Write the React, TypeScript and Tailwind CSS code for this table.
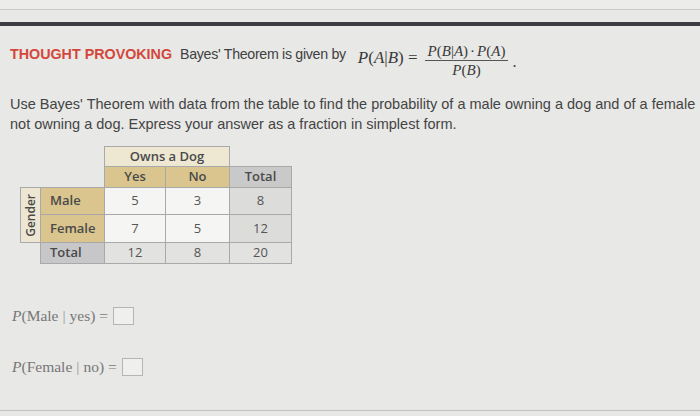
import React from 'react';

const sans = { fontFamily: '"Liberation Sans", Arial, sans-serif' };
const serif = { fontFamily: '"Liberation Serif", "Times New Roman", serif' };

function Fraction() {
  return (
    <span
      className="inline-flex flex-col items-center ml-[7px] mt-[12px] text-[15px] leading-[13px] tracking-normal text-[#3a3a3a]"
      style={serif}
    >
      <span className="px-[3px]">
        <i>P</i>(<i>B</i>|<i>A</i>)<span className="mx-[2px]">·</span><i>P</i>(<i>A</i>)
      </span>
      <span className="block w-full h-px bg-[#555] mt-[2px] mb-[3px]" />
      <span>
        <i>P</i>(<i>B</i>)
      </span>
    </span>
  );
}

function DogTable() {
  const c = '-ml-px -mt-px border border-[#a9a9a9] flex items-center justify-center';
  const head = 'font-semibold text-[#4a4a4a]';
  const num = 'text-[#555]';
  return (
    <div
      className="grid grid-cols-[20px_64px_61px_64px_62px] grid-rows-[20px_21px_27px_28px_21px] text-[13px] ml-[21px]"
      style={{ fontFamily: '"Open Sans", "Noto Sans", sans-serif' }}
    >
      <div className={`${c} ${head} col-start-3 col-span-2 row-start-1 bg-[#eee7d2]`}>Owns a Dog</div>
      <div className={`${c} ${head} col-start-3 row-start-2 bg-[#d9c58d]`}>Yes</div>
      <div className={`${c} ${head} col-start-4 row-start-2 bg-[#d9c58d]`}>No</div>
      <div className={`${c} ${head} col-start-5 row-start-2 bg-[#c9c9c9]`}>Total</div>

      <div className={`${c} ${head} col-start-1 row-start-3 row-span-2 bg-[#ece6d2]`}>
        <span className="[writing-mode:vertical-rl] rotate-180 text-[12px]">Gender</span>
      </div>
      <div className={`${c} ${head} col-start-2 row-start-3 bg-[#d9c58d] !justify-start pl-[9px]`}>Male</div>
      <div className={`${c} ${head} col-start-2 row-start-4 bg-[#d9c58d] !justify-start pl-[9px]`}>Female</div>
      <div className={`${c} ${head} col-start-2 row-start-5 bg-[#c7c7ca] !justify-start pl-[9px]`}>Total</div>

      <div className={`${c} ${num} col-start-3 row-start-3 bg-[#f5f5f3]`}>5</div>
      <div className={`${c} ${num} col-start-4 row-start-3 bg-[#f5f5f3]`}>3</div>
      <div className={`${c} ${num} col-start-5 row-start-3 bg-[#dcdcdb]`}>8</div>
      <div className={`${c} ${num} col-start-3 row-start-4 bg-[#f5f5f3]`}>7</div>
      <div className={`${c} ${num} col-start-4 row-start-4 bg-[#f5f5f3]`}>5</div>
      <div className={`${c} ${num} col-start-5 row-start-4 bg-[#dcdcdb]`}>12</div>
      <div className={`${c} ${num} col-start-3 row-start-5 bg-[#e2e2e0]`}>12</div>
      <div className={`${c} ${num} col-start-4 row-start-5 bg-[#e2e2e0]`}>8</div>
      <div className={`${c} ${num} col-start-5 row-start-5 bg-[#e2e2e0]`}>20</div>
    </div>
  );
}

function Answer({ label, given, className }: { label: string; given: string; className: string }) {
  return (
    <div className={`flex items-center h-[18px] leading-[18px] text-[15.5px] text-[#777] ${className}`} style={serif}>
      <i>P</i>
      <span>({label}</span>
      <span className="mx-[4px] text-[#999]">|</span>
      <span>{given}) =</span>
      <span className="ml-[5px] w-[21px] h-[18px] border border-[#b5b5b5] bg-[#efefed]" />
    </div>
  );
}

export default function App() {
  return (
    <div className="w-[700px] h-[416px] overflow-hidden bg-[#e8e8e6] flex flex-col" style={sans}>
      <div className="h-[10px] bg-[#ececea] border-b border-[#c9c9c9] shrink-0" />
      <div className="h-[12px] shrink-0" />
      <div className="h-[4px] bg-[#3c3c43] shrink-0" />

      <div className="flex items-center h-[58px] pl-[10px] text-[14.2px] tracking-[-0.3px] text-[#404040] shrink-0">
        <span className="font-bold text-[14.3px] tracking-normal text-[#d4463b]">THOUGHT PROVOKING</span>
        <span className="ml-[8px]">Bayes' Theorem is given by</span>
        <span className="ml-[12px] mt-[6px] text-[17px] tracking-normal text-[#3a3a3a]" style={serif}>
          <i>P</i>(<i>A</i>|<i>B</i>) =
        </span>
        <Fraction />
        <span className="ml-[4px] mt-[14px] text-[16px]" style={serif}>.</span>
      </div>

      <p className="px-[10px] pt-[10px] text-[14.5px] leading-[20px] text-[#444] whitespace-nowrap">
        Use Bayes' Theorem with data from the table to find the probability of a male owning a dog and of a female
        <br />
        not owning a dog. Express your answer as a fraction in simplest form.
      </p>

      <div className="mt-[13px]">
        <DogTable />
      </div>

      <Answer label="Male" given="yes" className="mt-[43px] ml-[12px]" />
      <Answer label="Female" given="no" className="mt-[33px] ml-[12px]" />

      <div className="mt-auto mb-[5px] h-px bg-[#c2c2c2]" />
    </div>
  );
}
